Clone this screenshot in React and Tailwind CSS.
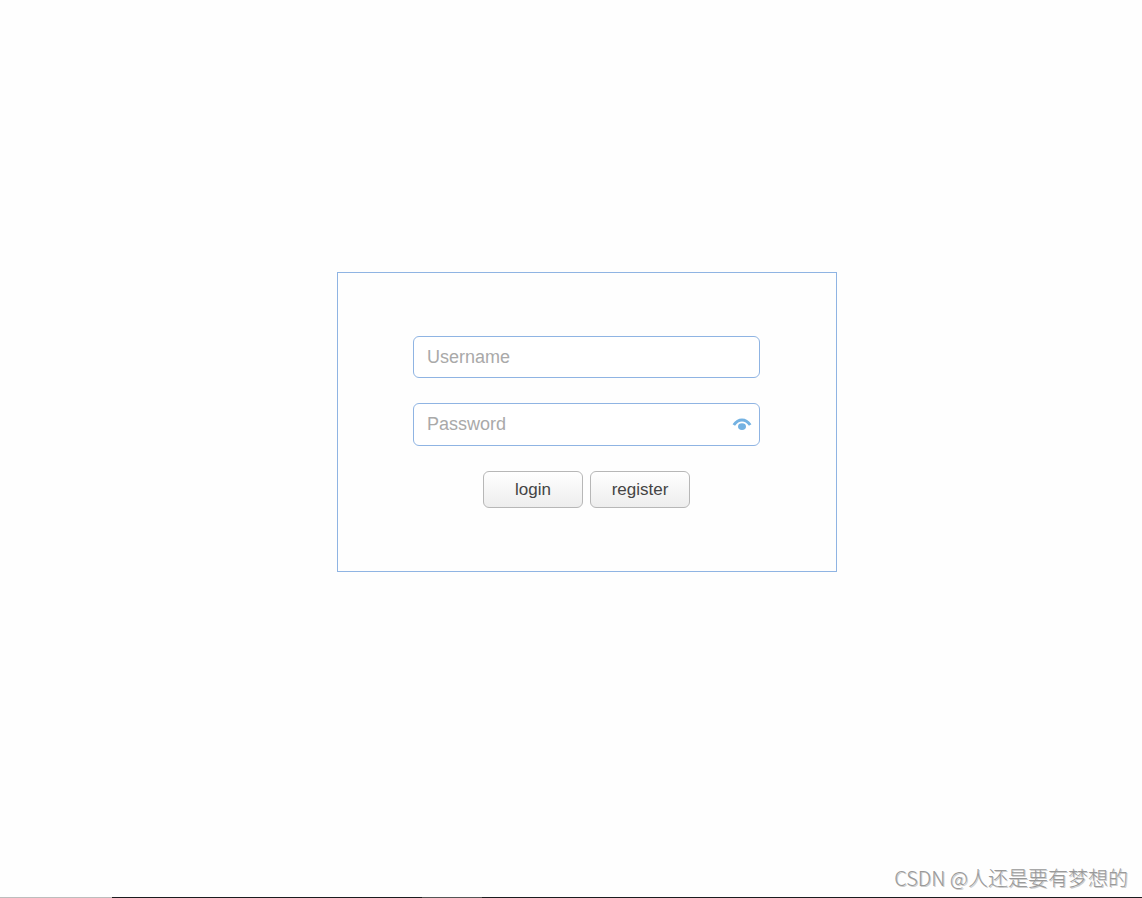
import React, { useState } from "react";

const inputClass =
  "w-full rounded-md border border-[#8fb4e3] bg-white pl-[13px] text-lg text-[#333] placeholder:text-[#a9a9a9] outline-none";

const buttonClass =
  "h-[37px] w-[100px] cursor-pointer rounded-md border border-[#b7b7b7] bg-linear-to-b from-white to-[#ededed] text-[17px] text-[#444]";

function EyeIcon() {
  return (
    <svg width="20" height="14" viewBox="0 0 20 14" aria-hidden="true">
      <path
        d="M1.8 7C4 3.8 6.8 2 10 2s6 1.8 8.2 5"
        fill="none"
        stroke="#74b2e2"
        strokeWidth="3"
      />
      <ellipse cx="10" cy="8.6" rx="4" ry="3.4" fill="#74b2e2" />
    </svg>
  );
}

function LoginForm() {
  const [showPassword, setShowPassword] = useState(false);

  return (
    <form
      className="flex h-[300px] w-full max-w-[500px] flex-col items-center justify-center border border-[#8fb4e3] pr-px"
      onSubmit={(e) => e.preventDefault()}
    >
      <div className="flex w-[347px] flex-col gap-[25px]">
        <input
          type="text"
          aria-label="Username"
          placeholder="Username"
          className={`${inputClass} h-[42px] pr-3`}
        />
        <div className="relative">
          <input
            type={showPassword ? "text" : "password"}
            aria-label="Password"
            placeholder="Password"
            className={`${inputClass} block h-[43px] pr-10`}
          />
          <button
            type="button"
            aria-label="Show password"
            className="absolute inset-y-0 right-2 flex cursor-pointer items-center"
            onClick={() => setShowPassword(!showPassword)}
          >
            <EyeIcon />
          </button>
        </div>
        <div className="flex justify-center gap-[7px]">
          <button type="submit" className={buttonClass}>
            login
          </button>
          <button type="button" className={buttonClass}>
            register
          </button>
        </div>
      </div>
    </form>
  );
}

export default function App() {
  return (
    <div className="flex min-h-screen flex-col bg-[#fefefe] font-['Liberation_Sans',Arial,sans-serif]">
      <main className="flex flex-1 items-center justify-center pl-8">
        <LoginForm />
      </main>
      <footer>
        <p className="flex h-[53px] items-center justify-end pt-3.5 pr-[14px] font-['Noto_Sans_CJK_SC',sans-serif] text-xl font-light text-[#999] [text-shadow:1px_1px_0_#ccc]">
          CSDN @人还是要有梦想的
        </p>
        <div className="flex h-px bg-[#1c1c1f]">
          <div className="w-28 bg-[#bdbdbd]" />
          <div className="ml-[310px] w-[60px] bg-[#555]" />
        </div>
      </footer>
    </div>
  );
}
